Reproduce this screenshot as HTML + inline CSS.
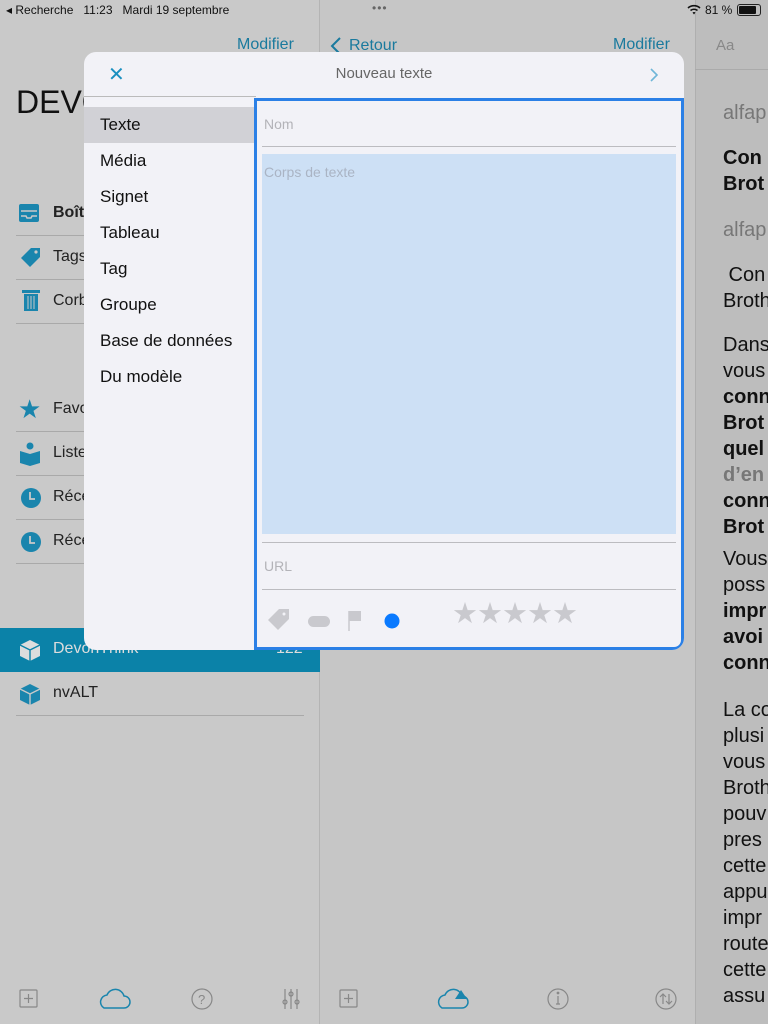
<!DOCTYPE html>
<html><head><meta charset="utf-8"><style>
*{margin:0;padding:0;box-sizing:border-box}
body{width:768px;height:1024px;overflow:hidden;position:relative;font-family:"Liberation Sans",sans-serif;background:#c6c6c6}
.abs{position:absolute}
.left{left:0;top:0;width:320px;height:1024px;background:#c9c9c9;border-right:1px solid #b4b4b4}
.mid{left:321px;top:0;width:374px;height:1024px;background:#c6c6c6}
.right{left:695px;top:0;width:73px;height:1024px;background:#bdbdbd;border-left:1px solid #afafaf}
.blue{color:#1a7a9e}
.row{position:absolute;left:16px;width:288px;height:44px;border-bottom:1.5px solid #a9a9a9;font-size:16px;color:#222}
.row span{position:absolute;left:37px;top:12px}
.rt{position:absolute;left:723px;font-size:20px;color:#111;white-space:nowrap}
.b{font-weight:bold}.g{color:#777}
.modal{left:84px;top:52px;width:600px;height:598px;background:#f2f2f7;border-radius:12px;overflow:hidden}
.menu div{position:absolute;left:16px;font-size:17px;color:#111}
.sep{position:absolute;left:8px;right:8px;height:1px;background:#bcbcc0}
.st{position:absolute;top:495px;font-size:29px;color:#c9c9ce}
</style></head><body>
<div class="abs left"></div>
<div class="abs mid"></div>
<div class="abs right"></div>
<div class="abs" style="left:0;top:0;width:768px;height:20px;font-size:12px;color:#111">
<span class="abs" style="left:6px;top:3px">◂ Recherche&nbsp;&nbsp;&nbsp;11:23&nbsp;&nbsp;&nbsp;Mardi 19 septembre</span>
<span class="abs" style="left:372px;top:1px;color:#666;letter-spacing:1px">•••</span>
<svg class="abs" style="left:687px;top:4px" width="14" height="11"><path d="M1 4a9 9 0 0 1 12 0M3.5 6.5a5.5 5.5 0 0 1 7 0" stroke="#111" stroke-width="1.6" fill="none"/><path d="M5.5 8.5l1.5 2 1.5-2a2.5 2.5 0 0 0-3 0z" fill="#111"/></svg>
<span class="abs" style="left:705px;top:3px">81 %</span>
<div class="abs" style="left:737px;top:4px;width:24px;height:12px;border:1px solid #222;border-radius:3px;padding:1px"><div style="width:17px;height:8px;background:#111;border-radius:1px"></div></div>
</div>
<div class="abs blue" style="left:237px;top:36px;font-size:16px">Modifier</div>
<svg class="abs" style="left:330px;top:37px" width="12" height="18"><path d="M10 1L2 9l8 8" stroke="#1a7a9e" stroke-width="2" fill="none"/></svg>
<div class="abs blue" style="left:349px;top:37px;font-size:16px">Retour</div>
<div class="abs blue" style="left:613px;top:36px;font-size:16px">Modifier</div>
<div class="abs" style="left:716px;top:37px;font-size:15px;color:#888">Aa</div>
<div class="abs" style="left:695px;top:69px;width:73px;height:1px;background:#aaa"></div>
<div class="abs" style="left:16px;top:84px;font-size:32px;color:#111">DEVO</div>
<div class="row" style="top:192px"><svg class="abs" style="left:2px;top:10px" width="22" height="22"><rect x="1" y="2" width="20" height="18" rx="2" fill="#1a85ad"/><path d="M3 9h16M3 14h5l1 2h4l1-2h5" stroke="#c9c9c9" stroke-width="1.5" fill="none"/></svg><span class="b">Boîte</span></div>
<div class="row" style="top:236px"><svg class="abs" style="left:4px;top:11px" width="22" height="22"><path d="M11 1h9v9L10 20 1 11z" fill="#1a85ad"/><circle cx="16" cy="5" r="1.6" fill="#c9c9c9"/></svg><span>Tags</span></div>
<div class="row" style="top:280px"><svg class="abs" style="left:6px;top:10px" width="18" height="22"><rect x="0" y="0" width="18" height="3" fill="#1a85ad"/><rect x="2" y="4" width="14" height="17" fill="#1a85ad"/><path d="M6 6v13M9 6v13M12 6v13" stroke="#c9c9c9"/></svg><span>Corb</span></div>
<div class="row" style="top:388px"><div class="abs" style="left:2px;top:6px;font-size:26px;color:#1a85ad">★</div><span>Favo</span></div>
<div class="row" style="top:432px"><svg class="abs" style="left:2px;top:10px" width="24" height="24"><circle cx="12" cy="4" r="3.5" fill="#1a85ad"/><path d="M2 9l10 3 10-3v12l-10 3-10-3z" fill="#1a85ad"/></svg><span>Liste</span></div>
<div class="row" style="top:476px"><svg class="abs" style="left:4px;top:11px" width="22" height="22"><circle cx="11" cy="11" r="10" fill="#1a85ad"/><path d="M10 5v7h5" stroke="#c9c9c9" stroke-width="1.8" fill="none"/></svg><span>Réce</span></div>
<div class="row" style="top:520px"><svg class="abs" style="left:4px;top:11px" width="22" height="22"><circle cx="11" cy="11" r="10" fill="#1a85ad"/><path d="M10 5v7h5" stroke="#c9c9c9" stroke-width="1.8" fill="none"/></svg><span>Réce</span></div>
<div class="abs" style="left:0;top:628px;width:320px;height:44px;background:#0b82a8"><svg class="abs" style="left:19px;top:11px" width="22" height="22"><path d="M11 1l10 5v11l-10 5-10-5V6z" fill="#ddd"/><path d="M1 6l10 5 10-5M11 11v11" stroke="#0b82a8" stroke-width="1.4" fill="none"/></svg><span class="abs" style="left:53px;top:12px;font-size:16px;color:#ddd">DevonThink</span><span class="abs" style="left:276px;top:12px;font-size:16px;color:#ddd">122</span></div>
<div class="row" style="top:672px"><svg class="abs" style="left:3px;top:11px" width="22" height="22"><path d="M11 1l10 5v11l-10 5-10-5V6z" fill="#1a85ad"/><path d="M1 6l10 5 10-5M11 11v11" stroke="#c9c9c9" stroke-width="1.4" fill="none"/></svg><span>nvALT</span></div>
<div class="rt g" style="top:102px">alfap</div>
<div class="rt b" style="top:145px;line-height:26px">Con<br>Brot</div>
<div class="rt g" style="top:219px">alfap</div>
<div class="rt" style="top:262px;line-height:26px">&nbsp;Con<br>Broth</div>
<div class="rt" style="top:332px;line-height:26px">Dans<br>vous<br><b>conn</b><br><b>Brot</b><br><b>quel</b><br><b class="g">d’en</b><br><b>conn</b><br><b>Brot</b></div>
<div class="rt" style="top:546px;line-height:26px">Vous<br>poss<br><b>impr</b><br><b>avoi</b><br><b>conn</b></div>
<div class="rt" style="top:697px;line-height:26px">La co<br>plusi<br>vous<br>Broth<br>pouv<br>pres<br>cette<br>appu<br>impr<br>route<br>cette<br>assu</div>
<svg class="abs" style="left:0;top:985px" width="695" height="30" fill="none" stroke="#888" stroke-width="1.2">
<rect x="20" y="5" width="17" height="17" rx="1"/><path d="M28.5 9v9M24 13.5h9"/>
<path d="M104 23h20a6 6 0 0 0 0-12 9 9 0 0 0-17-1 7 7 0 0 0-3 13z" stroke="#1a85ad" stroke-width="1.5"/>
<circle cx="202" cy="14" r="10"/><text x="198" y="19" font-size="13" fill="#888" stroke="none" font-family="Liberation Sans">?</text>
<path d="M285 4v20M291 4v20M297 4v20"/><circle cx="285" cy="17" r="2"/><circle cx="291" cy="9" r="2"/><circle cx="297" cy="17" r="2"/>
<rect x="340" y="5" width="17" height="17" rx="1"/><path d="M348.5 9v9M344 13.5h9"/>
<path d="M442 23h20a6 6 0 0 0 0-12 9 9 0 0 0-17-1 7 7 0 0 0-3 13z" stroke="#1a85ad" stroke-width="1.5"/><path d="M455 14l6-9 6 9z" fill="#1a85ad" stroke="none"/>
<circle cx="558" cy="14" r="10"/><path d="M558 11v8M556 19h4"/><circle cx="558" cy="8" r="0.8" fill="#888"/>
<circle cx="666" cy="14" r="10"/><path d="M663 9v10M660 12l3-3 3 3M669 9v10M666 16l3 3 3-3"/>
</svg>
<div class="abs modal">
<div class="abs" style="left:24px;top:10px;font-size:20px;color:#1a90c0">✕</div>
<div class="abs" style="left:0;width:600px;top:13px;text-align:center;font-size:15px;color:#666">Nouveau texte</div>
<svg class="abs" style="left:565px;top:16px" width="10" height="14"><path d="M2 1l6 6-6 6" stroke="#6fb6d8" stroke-width="1.6" fill="none"/></svg>
<div class="abs" style="left:0;top:44px;width:172px;height:1px;background:#bbb"></div>
<div class="abs" style="left:0;top:55px;width:170px;height:36px;background:#d1d1d6"></div>
<div class="menu">
<div style="top:63px">Texte</div><div style="top:99px">Média</div><div style="top:135px">Signet</div><div style="top:171px">Tableau</div><div style="top:207px">Tag</div><div style="top:243px">Groupe</div><div style="top:279px">Base de données</div><div style="top:315px">Du modèle</div>
</div>
<div class="abs" style="left:170px;top:46px;width:430px;height:552px;border:3px solid #2b80e6;border-radius:0 0 10px 0;background:#f2f2f7">
<div class="abs" style="left:7px;top:15px;font-size:14px;color:#b3b3b8">Nom</div>
<div class="sep" style="top:45px;left:5px;right:5px"></div>
<div class="abs" style="left:5px;top:53px;right:5px;height:380px;background:#cde0f5"></div>
<div class="abs" style="left:7px;top:63px;font-size:14px;color:#aab4c4">Corps de texte</div>
<div class="sep" style="top:441px;left:5px;right:5px"></div>
<div class="abs" style="left:7px;top:457px;font-size:14px;color:#b3b3b8">URL</div>
<div class="sep" style="top:488px;left:5px;right:5px"></div>
<svg class="abs" style="left:10px;top:505px" width="320" height="30">
<path d="M12 3h10v10L11 24 1 14z" fill="#c9c9ce"/><circle cx="17" cy="8" r="1.5" fill="#f2f2f7"/>
<rect x="41" y="10" width="22" height="11" rx="5.5" fill="#c9c9ce"/>
<path d="M82 5v20" stroke="#c9c9ce" stroke-width="1.5"/><path d="M82 5h12v10H82z" fill="#c9c9ce"/>
<circle cx="125" cy="15" r="7.5" fill="#0a7aff"/>
</svg>
<div class="st" style="left:195px">★</div><div class="st" style="left:220px">★</div><div class="st" style="left:245px">★</div><div class="st" style="left:270px">★</div><div class="st" style="left:295px">★</div>
</div>
</div>
</body></html>
